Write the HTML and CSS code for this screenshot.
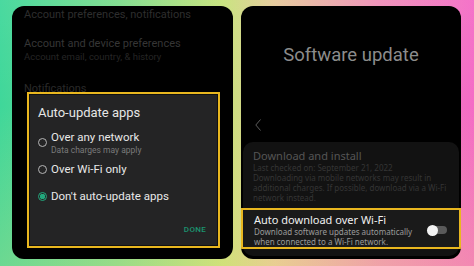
FILE: index.html
```html
<!DOCTYPE html>
<html lang="en">
<head>
    <meta charset="UTF-8">
    <meta name="viewport" content="width=device-width, initial-scale=1.0">
    <title>Auto updates</title>
    <link rel="stylesheet" href="styles.css">
</head>
<body>
    <div class="stage">
        <!-- Play Store settings with dialog -->
        <div class="phone phone-play">
            <div class="pref-list">
                <div class="pref-title pref-cut">Account preferences, notifications</div>
                <div class="pref-title">Account and device preferences</div>
                <div class="pref-sub">Account email, country, &amp; history</div>
                <div class="pref-title pref-section">Notifications</div>
            </div>
            <div class="dialog highlight">
                <div class="dialog-title">Auto-update apps</div>
                <div class="radio-row">
                    <span class="radio"></span>
                    <div class="radio-text">
                        <div class="radio-label">Over any network</div>
                        <div class="radio-hint">Data charges may apply</div>
                    </div>
                </div>
                <div class="radio-row">
                    <span class="radio"></span>
                    <div class="radio-label">Over Wi-Fi only</div>
                </div>
                <div class="radio-row radio-last">
                    <span class="radio radio-on"></span>
                    <div class="radio-label">Don't auto-update apps</div>
                </div>
                <div class="dialog-actions">
                    <span class="btn-done">DONE</span>
                </div>
            </div>
        </div>

        <!-- Samsung software update screen -->
        <div class="phone phone-sw">
            <h2 class="sw-title">Software update</h2>
            <svg class="back" viewBox="0 0 6 12" width="6" height="12">
                <path d="M5.5 0.5 L0.8 6 L5.5 11.5" fill="none" stroke="#5c5c5c" stroke-width="1"/>
            </svg>
            <div class="sw-card">
                <div class="sw-item">
                    <div class="sw-item-title">Download and install</div>
                    <div class="sw-item-sub">Last checked on: September 21, 2022</div>
                    <div class="sw-item-sub">Downloading via mobile networks may result in additional charges. If possible, download via a Wi-Fi network instead.</div>
                </div>
                <div class="sw-toggle-row highlight">
                    <div class="sw-toggle-text">
                        <div class="sw-toggle-title">Auto download over Wi-Fi</div>
                        <div class="sw-toggle-sub">Download software updates automatically when connected to a Wi-Fi network.</div>
                    </div>
                    <span class="switch"><span class="knob"></span></span>
                </div>
            </div>
        </div>
    </div>
</body>
</html>
```

FILE: styles.css
```css
html, body {
    margin: 0;
    height: 100%;
}
body {
    width: 474px;
    height: 266px;
    overflow: hidden;
    background:
        linear-gradient(180deg, rgba(255,255,255,0.06) 0%, rgba(255,255,255,0) 40%, rgba(240,220,120,0.25) 100%),
        linear-gradient(90deg, #3fd79a 0%, #7ddc8c 25%, #c6e27a 47%, #e6c99a 58%, #ef8fb8 80%, #f46bc6 100%);
    font-family: Roboto, "Noto Sans", sans-serif;
}
.stage {
    display: flex;
    gap: 8px;
    padding: 6px 13px 0 12px;
}
.phone {
    height: 253px;
    background: #000;
    border-radius: 12px;
    overflow: hidden;
    box-sizing: border-box;
}
.highlight {
    border: 2px solid #e9b71f;
}

/* left phone */
.phone-play {
    width: 221px;
    position: relative;
    padding: 2px 12px 0;
}
.pref-list {
    color: #363636;
}
.pref-title {
    font-size: 11px;
    line-height: 14px;
}
.pref-cut {
    color: #2e2e2e;
}
.pref-title + .pref-title {
    margin-top: 15px;
}
.pref-sub {
    font-size: 9.5px;
    line-height: 12px;
    color: #252525;
}
.pref-section {
    margin-top: 19px;
    color: #2a2a2a;
}
.dialog {
    position: absolute;
    left: 15px;
    top: 86px;
    width: 193px;
    height: 156px;
    box-sizing: border-box;
    background: #242425;
    box-shadow: inset 0 0 0 1px #111;
    padding: 10px 12px 0 9px;
    color: #e6e6e6;
}
.dialog-title {
    font-size: 13px;
    line-height: 18px;
}
.radio-row {
    display: flex;
    align-items: center;
    gap: 4px;
    margin-top: 7px;
}
.radio-row + .radio-row {
    margin-top: 5px;
}
.radio-row.radio-last {
    margin-top: 11px;
}
.radio {
    width: 7px;
    height: 7px;
    border: 1.5px solid #b5b5b5;
    border-radius: 50%;
    flex: none;
}
.radio-on {
    border-color: #22a77c;
    background: radial-gradient(circle, #22a77c 0 2.5px, transparent 3px);
}
.radio-label {
    font-size: 11.5px;
    line-height: 16px;
    color: #e8e8e8;
}
.radio-hint {
    font-size: 8.5px;
    line-height: 11px;
    color: #7a7a7a;
}
.dialog-actions {
    display: flex;
    justify-content: flex-end;
    margin-top: 21px;
}
.btn-done {
    font-size: 8px;
    font-weight: 500;
    letter-spacing: 0.3px;
    color: #1b9470;
}

/* right phone */
.phone-sw {
    width: 220px;
    display: flex;
    flex-direction: column;
    padding: 0 0 3px;
}
.sw-title {
    margin: 38px 0 0;
    text-align: center;
    font-family: Roboto, sans-serif;
    font-weight: 400;
    font-size: 18.5px;
    line-height: 23px;
    color: #8c8c8c;
}
.back {
    margin: 52px 0 0 14px;
}
.sw-card {
    margin: auto 2px 0;
    background: #121212;
    border-radius: 10px;
    font-family: "Noto Sans", sans-serif;
}
.sw-item {
    padding: 6px 10px 5px;
}
.sw-item-title {
    font-size: 11px;
    line-height: 15px;
    color: #555;
}
.sw-item-sub {
    font-size: 8px;
    line-height: 10px;
    color: #353535;
}
.sw-toggle-row {
    display: flex;
    align-items: center;
    margin: 0 -2px 7px;
    padding: 3px 12px 0 11px;
    background: #1a1a1a;
}
.sw-toggle-text {
    flex: 1;
}
.sw-toggle-title {
    font-size: 11px;
    line-height: 14px;
    color: #f0f0f0;
}
.sw-toggle-sub {
    font-size: 8px;
    line-height: 10px;
    color: #9a9a9a;
    width: 170px;
}
.switch {
    width: 19px;
    height: 8px;
    border-radius: 4px;
    background: #5a5a5a;
    position: relative;
    flex: none;
}
.knob {
    position: absolute;
    left: -1px;
    top: -1.5px;
    width: 11px;
    height: 11px;
    border-radius: 50%;
    background: #f2f2f2;
}
```
